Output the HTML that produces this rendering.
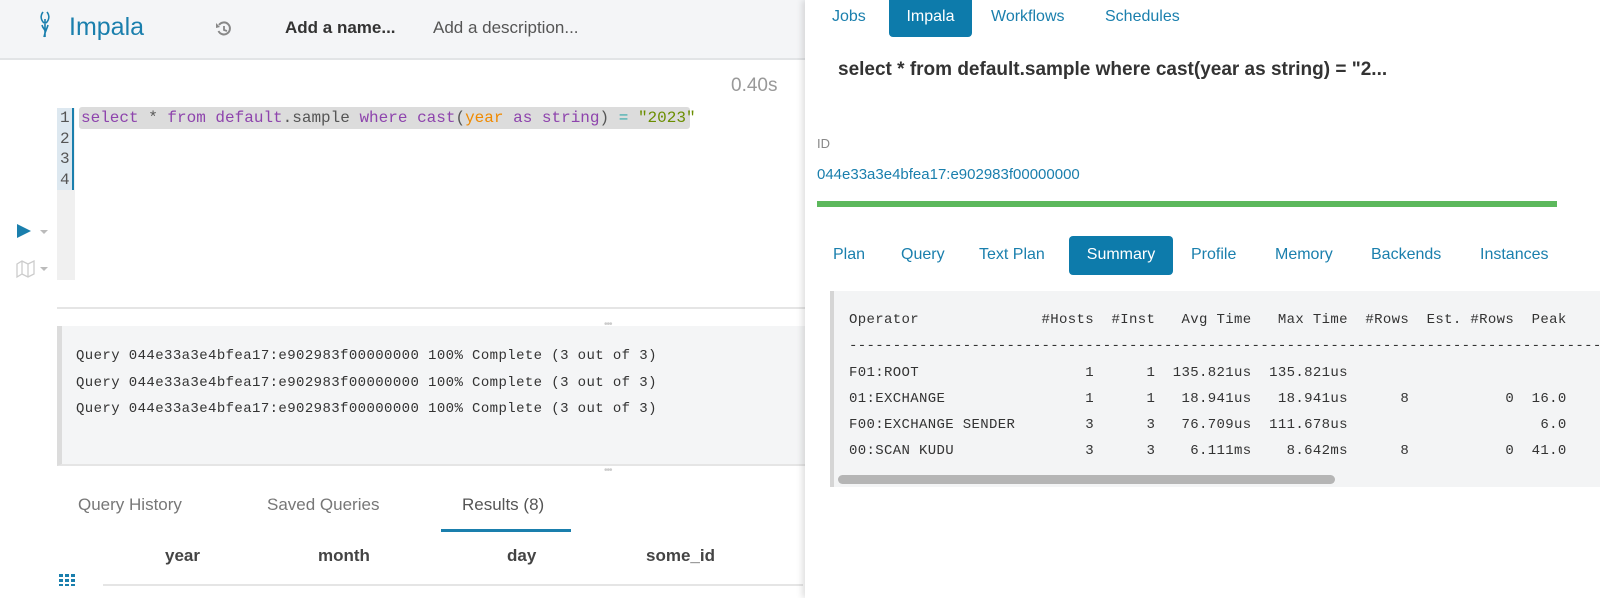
<!DOCTYPE html>
<html><head><meta charset="utf-8"><style>
*{margin:0;padding:0;box-sizing:border-box}
body{width:1600px;height:598px;overflow:hidden;background:#fff;font-family:"Liberation Sans",sans-serif;position:relative}
.a{position:absolute;white-space:nowrap}
.mono{font-family:"Liberation Mono",monospace}
.blue{color:#1a7fad}
</style></head><body>
<!-- header -->
<div class="a" style="left:0;top:0;width:805px;height:60px;background:#f4f5f7;border-bottom:2px solid #e2e4e6"></div>
<svg class="a" style="left:37px;top:11px" width="16" height="28" viewBox="0 0 16 28"><path d="M6 1 C3 5 4 9 7 12 M10 1 C13 5 12 9 9 12 M8 8 L8 26 M5 14 C6 18 8 18 8 20 M11 14 C10 18 8 20 7 26" stroke="#1a7fad" stroke-width="1.6" fill="none"/></svg>
<div class="a blue" style="left:69px;top:13px;font-size:25px">Impala</div>
<svg class="a" style="left:215px;top:20px" width="18" height="18" viewBox="0 0 18 18"><path d="M4 5 A6 6 0 1 1 3.5 11" stroke="#888" stroke-width="2" fill="none"/><path d="M1 3 L5 7 L1 8 Z" fill="#888"/><path d="M9 6 L9 10 L12 11" stroke="#888" stroke-width="1.8" fill="none"/></svg>
<div class="a" style="left:285px;top:18px;font-size:17px;font-weight:bold;color:#333">Add a name...</div>
<div class="a" style="left:433px;top:18px;font-size:17px;color:#555">Add a description...</div>
<div class="a" style="left:731px;top:75px;font-size:19px;color:#999">0.40s</div>
<!-- editor gutter -->
<div class="a" style="left:57px;top:108px;width:18px;height:172px;background:#f0f0f0"></div>
<div class="a mono" style="left:57px;top:108px;width:17px;height:82px;background:#dde8f0;border-right:2px solid #1a7fad;color:#555;font-size:16px;line-height:20.5px;padding-left:3px">1<br>2<br>3<br>4</div>
<div class="a mono" style="left:79px;top:107px;width:611px;height:22px;background:#dcdcdc;border-radius:3px"></div>
<div class="a mono" style="left:81px;top:108px;font-size:16px;line-height:20px;color:#555"><span style="color:#8e44ad">select</span> * <span style="color:#8e44ad">from default</span>.sample <span style="color:#8e44ad">where cast</span>(<span style="color:#f08a00">year</span> <span style="color:#8e44ad">as string</span>) <span style="color:#3aa">=</span> <span style="color:#6b8e00">"2023"</span></div>
<svg class="a" style="left:16px;top:223px" width="36" height="56" viewBox="0 0 36 56"><path d="M1 1 L15 8 L1 15 Z" fill="#1a7fad"/><path d="M24 7 L32 7 L28 11 Z" fill="#bbb"/><path d="M1 41 L6 38 L12 41 L18 38 L18 51 L12 54 L6 51 L1 54 Z M6 38 L6 51 M12 41 L12 54" stroke="#ccc" stroke-width="1.3" fill="none"/><path d="M24 44 L32 44 L28 48 Z" fill="#bbb"/></svg>
<!-- log -->
<div class="a" style="left:57px;top:307px;width:748px;height:2px;background:#e5e5e5"></div>
<div class="a" style="left:604px;top:319px;color:#ccc;font-size:10px;letter-spacing:-1px">•••</div>
<div class="a" style="left:57px;top:326px;width:748px;height:140px;background:#f4f5f6;border-left:5px solid #dcdcdc;border-bottom:2px solid #e5e5e5"></div>
<div class="a mono" style="left:76px;top:343px;font-size:14px;letter-spacing:0.4px;line-height:26.5px;color:#333">Query 044e33a3e4bfea17:e902983f00000000 100% Complete (3 out of 3)<br>Query 044e33a3e4bfea17:e902983f00000000 100% Complete (3 out of 3)<br>Query 044e33a3e4bfea17:e902983f00000000 100% Complete (3 out of 3)</div>
<div class="a" style="left:604px;top:465px;color:#ccc;font-size:10px;letter-spacing:-1px">•••</div>
<div class="a" style="left:78px;top:495px;font-size:17px;color:#777">Query History</div>
<div class="a" style="left:267px;top:495px;font-size:17px;color:#777">Saved Queries</div>
<div class="a" style="left:462px;top:495px;font-size:17px;color:#555">Results (8)</div>
<div class="a" style="left:441px;top:529px;width:130px;height:3px;background:#1a7fad"></div>
<div class="a" style="left:165px;top:546px;font-size:17px;font-weight:bold;color:#444">year</div>
<div class="a" style="left:318px;top:546px;font-size:17px;font-weight:bold;color:#444">month</div>
<div class="a" style="left:507px;top:546px;font-size:17px;font-weight:bold;color:#444">day</div>
<div class="a" style="left:646px;top:546px;font-size:17px;font-weight:bold;color:#444">some_id</div>
<svg class="a" style="left:59px;top:574px" width="18" height="12"><g fill="#1a7fad"><rect x="0" y="0" width="4" height="3"/><rect x="6" y="0" width="4" height="3"/><rect x="12" y="0" width="4" height="3"/><rect x="0" y="5" width="4" height="3"/><rect x="6" y="5" width="4" height="3"/><rect x="12" y="5" width="4" height="3"/><rect x="0" y="10" width="4" height="3"/><rect x="6" y="10" width="4" height="3"/><rect x="12" y="10" width="4" height="3"/></g></svg>
<div class="a" style="left:103px;top:584px;width:700px;height:2px;background:#e5e5e5"></div>
<!-- right panel -->
<div class="a" style="left:805px;top:0;width:795px;height:598px;background:#fff;box-shadow:-3px 0 6px rgba(0,0,0,0.12)"></div>
<div class="a blue" style="left:832px;top:8px;font-size:16px">Jobs</div>
<div class="a" style="left:889px;top:0;width:83px;height:37px;background:#0d7bab;border-radius:0 0 4px 4px;color:#fff;font-size:16px;text-align:center;padding-top:8px">Impala</div>
<div class="a blue" style="left:991px;top:8px;font-size:16px">Workflows</div>
<div class="a blue" style="left:1105px;top:8px;font-size:16px">Schedules</div>
<div class="a" style="left:838px;top:59px;font-size:19px;font-weight:bold;color:#333">select * from default.sample where cast(year as string) = "2...</div>
<div class="a" style="left:817px;top:136px;font-size:13px;color:#888">ID</div>
<div class="a blue" style="left:817px;top:166px;font-size:15px">044e33a3e4bfea17:e902983f00000000</div>
<div class="a" style="left:817px;top:201px;width:740px;height:6px;background:#5cb85c"></div>
<div class="a blue" style="left:833px;top:246px;font-size:16px">Plan</div>
<div class="a blue" style="left:901px;top:246px;font-size:16px">Query</div>
<div class="a blue" style="left:979px;top:246px;font-size:16px">Text Plan</div>
<div class="a" style="left:1069px;top:236px;width:104px;height:39px;background:#0d7bab;border-radius:4px;color:#fff;font-size:16px;text-align:center;padding-top:10px">Summary</div>
<div class="a blue" style="left:1191px;top:246px;font-size:16px">Profile</div>
<div class="a blue" style="left:1275px;top:246px;font-size:16px">Memory</div>
<div class="a blue" style="left:1371px;top:246px;font-size:16px">Backends</div>
<div class="a blue" style="left:1480px;top:246px;font-size:16px">Instances</div>
<div class="a" style="left:830px;top:291px;width:770px;height:196px;background:#f3f4f5;border-left:4px solid #d5d5d5;overflow:hidden">
<pre class="mono" style="position:absolute;left:15px;top:16px;font-size:14px;letter-spacing:0.35px;line-height:26.3px;color:#333">Operator              #Hosts  #Inst   Avg Time   Max Time  #Rows  Est. #Rows  Peak
-------------------------------------------------------------------------------------------
F01:ROOT                   1      1  135.821us  135.821us
01:EXCHANGE                1      1   18.941us   18.941us      8           0  16.0
F00:EXCHANGE SENDER        3      3   76.709us  111.678us                      6.0
00:SCAN KUDU               3      3    6.111ms    8.642ms      8           0  41.0</pre>
<div style="position:absolute;left:4px;top:184px;width:497px;height:9px;background:#b5b5b5;border-radius:5px"></div>
</div>
</body></html>
